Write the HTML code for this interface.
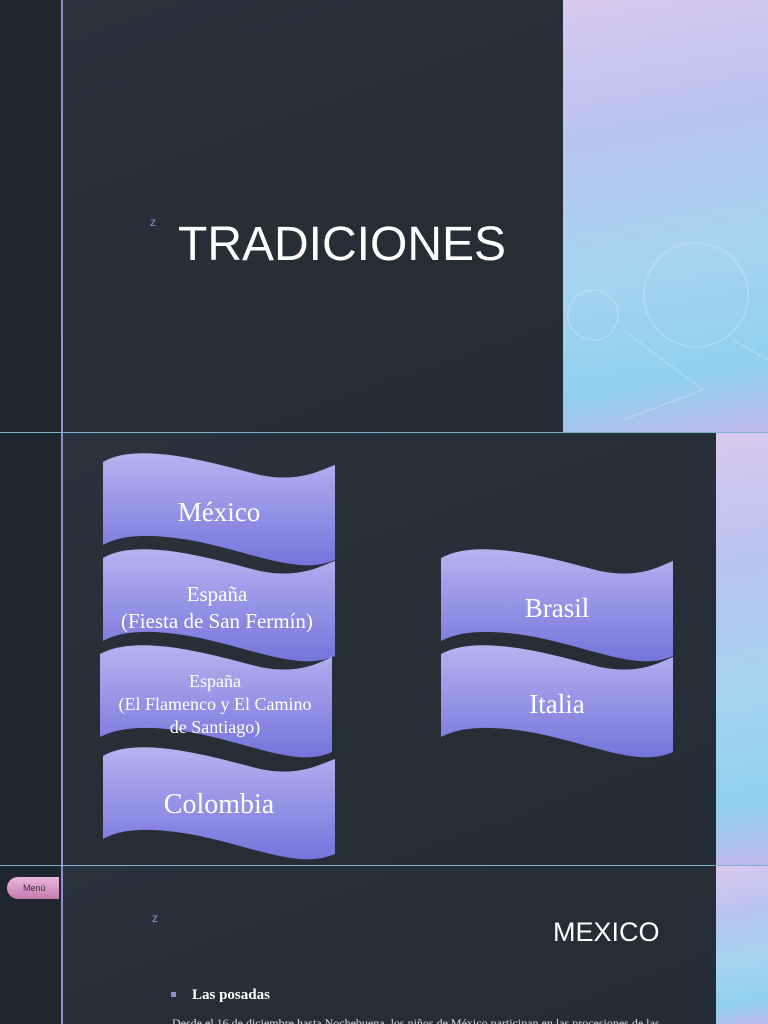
<!DOCTYPE html>
<html><head><meta charset="utf-8"><style>
html,body{margin:0;width:768px;height:1024px;overflow:hidden}
body{background:#22282f;position:relative;font-family:"Liberation Sans",sans-serif}
.a{position:absolute}
.slide{background:linear-gradient(160deg,#2c323d,#262d35 60%,#252d34)}
.strip{background:linear-gradient(170deg,#d9c8ef,#b8c4f0 30%,#a6d4f0 60%,#8fd0ee 85%,#c0b8ec)}
</style></head><body>
<div class="a" style="left:0;top:0;width:61px;height:1024px;background:#20262d"></div>
<div class="a" style="left:61px;top:0;width:2px;height:1024px;background:#8f8fd8"></div>
<div class="a slide" style="left:63px;top:0;width:500px;height:432px"></div>
<div class="a strip" style="left:563px;top:0;width:205px;height:432px"></div>
<svg class="a" style="left:563px;top:0" width="205" height="432"><g fill="none" stroke="#fff" stroke-opacity=".18" stroke-width="2"><circle cx="133" cy="295" r="52"/><circle cx="30" cy="315" r="25"/><path d="M60 330 L140 390 L60 420"/><path d="M170 340 L205 360"/></g></svg>
<div class="a" style="left:0;top:432px;width:768px;height:1px;background:#7fb0d8"></div>
<div class="a slide" style="left:63px;top:433px;width:653px;height:432px"></div>
<div class="a strip" style="left:716px;top:433px;width:52px;height:432px"></div>
<div class="a" style="left:0;top:865px;width:768px;height:1px;background:#7fb0d8"></div>
<div class="a slide" style="left:63px;top:866px;width:653px;height:158px"></div>
<div class="a strip" style="left:716px;top:866px;width:52px;height:158px"></div>
<div class="a" style="left:150px;top:215px;color:#8f8fd8;font-size:12px">z</div>
<div class="a" style="left:178px;top:217px;color:#fff;font-size:48px">TRADICIONES</div>
<svg class="a" style="left:0;top:0" width="768" height="1024">
<defs><linearGradient id="g" x1="0" y1="0" x2="0" y2="1"><stop offset="0" stop-color="#b4b4f0"/><stop offset="1" stop-color="#7474dc"/></linearGradient></defs>
<g fill="url(#g)">
<path d="M103,462 C140,440 220,465 260,475 C300,483 320,470 335,465 L335,560 C300,575 260,555 200,542 C150,532 120,535 103,545 Z"/>
<path d="M103,558 C140,536 220,561 260,571 C300,579 320,566 335,561 L335,656 C300,671 260,651 200,638 C150,628 120,631 103,641 Z"/>
<path d="M100,654 C140,632 220,657 260,667 C300,675 320,662 332,657 L332,752 C300,767 260,747 200,734 C150,724 120,727 100,737 Z"/>
<path d="M103,756 C140,734 220,759 260,769 C300,777 320,764 335,759 L335,854 C300,869 260,849 200,836 C150,826 120,829 103,839 Z"/>
<path d="M441,558 C480,536 560,561 600,571 C640,579 660,566 673,561 L673,656 C640,671 600,651 540,638 C490,628 460,631 441,641 Z"/>
<path d="M441,654 C480,632 560,657 600,667 C640,675 660,662 673,657 L673,752 C640,767 600,747 540,734 C490,724 460,727 441,737 Z"/>
</g>
<g fill="#fff" font-family="Liberation Serif,serif" text-anchor="middle">
<text x="219" y="521" font-size="27">México</text>
<text x="217" y="601" font-size="21">España</text>
<text x="217" y="628" font-size="21">(Fiesta de San Fermín)</text>
<text x="215" y="687" font-size="18">España</text>
<text x="215" y="710" font-size="18">(El Flamenco y El Camino</text>
<text x="215" y="733" font-size="18">de Santiago)</text>
<text x="219" y="813" font-size="28">Colombia</text>
<text x="557" y="617" font-size="27">Brasil</text>
<text x="557" y="713" font-size="27">Italia</text>
</g></svg>
<div class="a" style="left:7px;top:877px;width:52px;height:22px;border-radius:11px 0 0 11px;background:linear-gradient(#eab8dc,#c47ab0);font-size:9px;color:#333;line-height:22px;text-indent:16px">Menú</div>
<div class="a" style="left:152px;top:911px;color:#8f8fd8;font-size:12px">z</div>
<div class="a" style="left:553px;top:917px;color:#fff;font-size:27px">MEXICO</div>
<div class="a" style="left:171px;top:992px;width:5px;height:5px;background:#8f8fd8"></div>
<div class="a" style="left:192px;top:987px;color:#fff;font:bold 15px 'Liberation Serif',serif">Las posadas</div>
<div class="a" style="left:172px;top:1016px;color:#ddd;font:12px 'Liberation Serif',serif;white-space:nowrap">Desde el 16 de diciembre hasta Nochebuena, los niños de México participan en las procesiones de las</div>
</body></html>
